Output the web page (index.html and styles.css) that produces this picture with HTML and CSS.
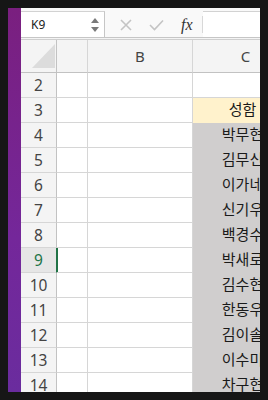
FILE: index.html
```html
<!DOCTYPE html>
<html lang="ko">
<head>
<meta charset="UTF-8">
<meta name="viewport" content="width=device-width, initial-scale=1.0">
<title>시트</title>
<link rel="stylesheet" href="styles.css">
</head>
<body>
    <div class="frame">
        <div class="accent"></div>
        <div class="excel">
            <!-- 수식 입력줄 -->
            <div class="formula-bar">
                <div class="name-box">
                    <span class="cell-ref">K9</span>
                    <span class="spin">
                        <svg width="8" height="16" viewBox="0 0 8 16"><polygon points="4,1 8,6 0,6" fill="#7a7a7a"/><polygon points="0,10 8,10 4,15" fill="#7a7a7a"/></svg>
                    </span>
                </div>
                <div class="fb-icons">
                    <svg class="ico-x" width="12" height="12" viewBox="0 0 12 12"><path d="M1 1 L11 11 M11 1 L1 11" stroke="#c4c4c4" stroke-width="1.6" fill="none"/></svg>
                    <svg class="ico-ok" width="15" height="12" viewBox="0 0 15 12"><path d="M1 6 L5.5 10.5 L14 1.5" stroke="#c4c4c4" stroke-width="1.6" fill="none"/></svg>
                    <span class="fx">fx</span>
                </div>
                <div class="formula-input"></div>
            </div>

            <!-- 시트 -->
            <div class="sheet">
                <div class="corner"><svg width="36" height="32" viewBox="0 0 36 32"><polygon points="11,28 34,28 34,4" fill="#dcdcdc"/></svg></div>
                <div class="col-head"></div>
                <div class="col-head">B</div>
                <div class="col-head">C</div>

                <div class="row-head">2</div><div class="cell"></div><div class="cell"></div><div class="cell"></div>
                <div class="row-head">3</div><div class="cell"></div><div class="cell"></div><div class="cell c title">성함</div>
                <div class="row-head">4</div><div class="cell"></div><div class="cell"></div><div class="cell c name">박무현</div>
                <div class="row-head">5</div><div class="cell"></div><div class="cell"></div><div class="cell c name">김무신</div>
                <div class="row-head">6</div><div class="cell"></div><div class="cell"></div><div class="cell c name">이가네</div>
                <div class="row-head">7</div><div class="cell"></div><div class="cell"></div><div class="cell c name">신기우</div>
                <div class="row-head">8</div><div class="cell"></div><div class="cell"></div><div class="cell c name">백경수</div>
                <div class="row-head active">9</div><div class="cell active"></div><div class="cell"></div><div class="cell c name">박새로</div>
                <div class="row-head">10</div><div class="cell"></div><div class="cell"></div><div class="cell c name">김수현</div>
                <div class="row-head">11</div><div class="cell"></div><div class="cell"></div><div class="cell c name">한동우</div>
                <div class="row-head">12</div><div class="cell"></div><div class="cell"></div><div class="cell c name">김이솔</div>
                <div class="row-head">13</div><div class="cell"></div><div class="cell"></div><div class="cell c name">이수미</div>
                <div class="row-head">14</div><div class="cell"></div><div class="cell"></div><div class="cell c name">차구현</div>
            </div>
        </div>
    </div>
</body>
</html>
```

FILE: styles.css
```css
html, body {
    margin: 0;
    padding: 0;
}
body {
    width: 268px;
    height: 400px;
    overflow: hidden;
    background: #161616;
    font-family: "Noto Sans", "Noto Sans CJK KR", sans-serif;
}
.frame {
    display: flex;
    height: 384px;
    padding: 8px;
}
.accent {
    width: 13px;
    flex: none;
    background: linear-gradient(180deg, #7a1f7f 0%, #74279a 60%, #6a2c9e 100%);
}
.excel {
    flex: 1;
    overflow: hidden;
    background: #f4f4f4;
}

/* 수식 입력줄 */
.formula-bar {
    display: flex;
    height: 29px;
    border-bottom: 1px solid #c6c6c6;
    margin-bottom: 1px;
    background: #f9f9f9;
}
.name-box {
    display: flex;
    align-items: center;
    justify-content: space-between;
    box-sizing: border-box;
    width: 84px;
    margin-top: 3px;
    padding: 0 5px 0 10px;
    background: #fff;
    border-top: 1px solid #d2d2d2;
    border-right: 1px solid #c6c6c6;
}
.cell-ref {
    font-size: 12px;
    color: #222;
}
.spin svg {
    display: block;
}
.fb-icons {
    display: flex;
    align-items: center;
    width: 97px;
    border-right: 1px solid #d8d8d8;
    margin: 8px 0 4px;
}
.ico-x {
    margin-left: 15px;
}
.ico-ok {
    margin-left: 17px;
}
.fx {
    margin-left: 17px;
    font-family: "Liberation Serif", serif;
    font-style: italic;
    font-size: 16px;
    color: #333;
}
.formula-input {
    flex: 1;
    margin-top: 3px;
    background: #fff;
    border-top: 1px solid #d2d2d2;
}

/* 시트 */
.sheet {
    display: grid;
    grid-template-columns: 36px 31px 105px 106px;
    grid-template-rows: 33px;
    grid-auto-rows: 25px;
    border-top: 1px solid #cfcfcf;
}
.sheet > div {
    box-sizing: border-box;
    border-right: 1px solid #d6d6d6;
    border-bottom: 1px solid #d6d6d6;
}
.corner {
    background: #f4f4f4;
}
.corner svg {
    display: block;
}
.sheet > .corner,
.sheet > .col-head {
    border-bottom-color: #c2c2c2;
}
.col-head {
    display: flex;
    align-items: center;
    justify-content: center;
    background: #f4f4f4;
    color: #444;
    font-size: 15px;
}
.row-head {
    display: flex;
    align-items: center;
    justify-content: center;
    background: #f4f4f4;
    color: #444;
    font-size: 15.5px;
}
.sheet > .row-head,
.sheet > .corner {
    border-right-color: #c2c2c2;
}
.sheet > .row-head.active {
    background: #e6e6e6;
    color: #217346;
    border-right-color: #217346;
}
.cell {
    background: #fff;
}
.cell.active {
    box-shadow: inset 1px 0 0 #217346;
}
.c {
    padding-right: 6px;
    text-align: center;
    font-family: "Noto Sans CJK KR", sans-serif;
    font-size: 15px;
    line-height: 21px;
    color: #1a1a1a;
    white-space: nowrap;
}
.sheet > .title {
    background: #fff2cc;
    border-color: #fff2cc;
}
.sheet > .name {
    background: #d0cece;
    border-color: #d0cece;
}
```
